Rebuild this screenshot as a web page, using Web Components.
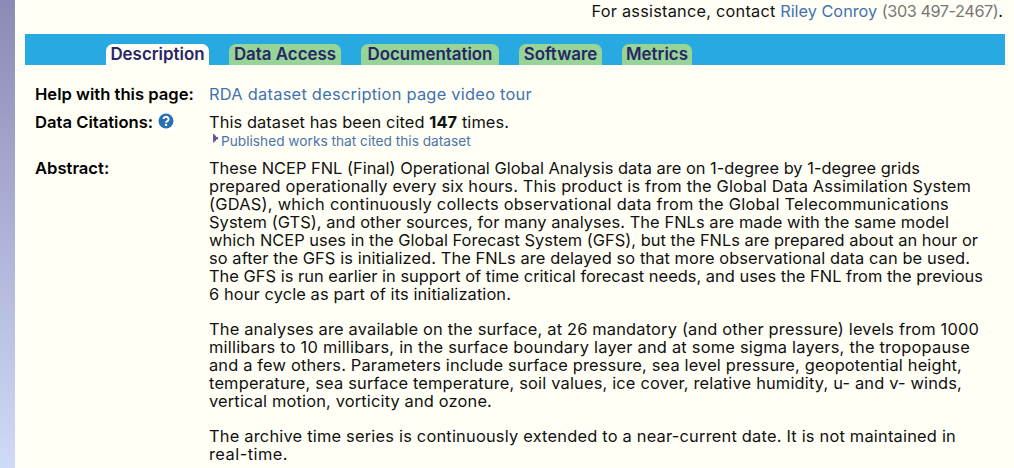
<!DOCTYPE html>
<html>
<head>
<meta charset="utf-8">
<title>Dataset description</title>
<style>
	html, body {
		margin: 0;
		height: 468px;
		overflow: hidden;
		background: #fffff6;
		font-family: Inter, "Liberation Sans", sans-serif;
	}
</style>
</head>
<body>
<rda-page>
	<rda-contact slot="contact"></rda-contact>
	<rda-tabs slot="tabs">
		<rda-tab active w="103">Description</rda-tab>
		<rda-tab w="112">Data Access</rda-tab>
		<rda-tab w="138">Documentation</rda-tab>
		<rda-tab w="83">Software</rda-tab>
		<rda-tab w="70">Metrics</rda-tab>
	</rda-tabs>
	<rda-row slot="rows" style="--row-height: 28px">
		<span slot="label">Help with this page:</span>
		<rda-line w="323" style="color:#3f72af">RDA dataset description page video tour</rda-line>
	</rda-row>
	<rda-row slot="rows" help style="--row-height: 46px">
		<span slot="label">Data Citations:</span>
		<rda-line w="300">This dataset has been cited <b>147</b> times.</rda-line>
		<rda-sublink>Published works that cited this dataset</rda-sublink>
	</rda-row>
	<rda-row slot="rows">
		<span slot="label">Abstract:</span>
		<rda-para>
			<rda-line w="711">These NCEP FNL (Final) Operational Global Analysis data are on 1-degree by 1-degree grids</rda-line>
			<rda-line w="762">prepared operationally every six hours. This product is from the Global Data Assimilation System</rda-line>
			<rda-line w="740">(GDAS), which continuously collects observational data from the Global Telecommunications</rda-line>
			<rda-line w="740">System (GTS), and other sources, for many analyses. The FNLs are made with the same model</rda-line>
			<rda-line w="769">which NCEP uses in the Global Forecast System (GFS), but the FNLs are prepared about an hour or</rda-line>
			<rda-line w="761">so after the GFS is initialized. The FNLs are delayed so that more observational data can be used.</rda-line>
			<rda-line w="774">The GFS is run earlier in support of time critical forecast needs, and uses the FNL from the previous</rda-line>
			<rda-line w="302">6 hour cycle as part of its initialization.</rda-line>
		</rda-para>
		<rda-para>
			<rda-line w="770">The analyses are available on the surface, at 26 mandatory (and other pressure) levels from 1000</rda-line>
			<rda-line w="761">millibars to 10 millibars, in the surface boundary layer and at some sigma layers, the tropopause</rda-line>
			<rda-line w="753">and a few others. Parameters include surface pressure, sea level pressure, geopotential height,</rda-line>
			<rda-line w="753">temperature, sea surface temperature, soil values, ice cover, relative humidity, u- and v- winds,</rda-line>
			<rda-line w="283">vertical motion, vorticity and ozone.</rda-line>
		</rda-para>
		<rda-para>
			<rda-line w="747">The archive time series is continuously extended to a near-current date. It is not maintained in</rda-line>
			<rda-line w="79">real-time.</rda-line>
		</rda-para>
	</rda-row>
</rda-page>

<script>
class RdaPage extends HTMLElement {
	constructor() {
		super();
		this.attachShadow({ mode: "open" }).innerHTML = `
			<style>
				:host {
					display: grid;
					grid-template-columns: 15px 1fr;
					height: 468px;
				}
				.strip {
					background: linear-gradient(#8c8ab6, #d0ddf9);
				}
				.main {
					padding: 0 9px 0 10px;
					min-width: 0;
				}
				.rows {
					padding: 20px 0 0 10px;
				}
			</style>
			<div class="strip"></div>
			<div class="main">
				<slot name="contact"></slot>
				<slot name="tabs"></slot>
				<div class="rows"><slot name="rows"></slot></div>
			</div>
		`;
	}
}

class RdaContact extends HTMLElement {
	constructor() {
		super();
		this.attachShadow({ mode: "open" }).innerHTML = `
			<style>
				:host {
					display: flex;
					justify-content: flex-end;
					height: 34px;
					padding-right: 2px;
					box-sizing: border-box;
					font-size: 16.3px;
					line-height: 22px;
					color: #111;
					white-space: pre;
				}
				em { font-style: normal; letter-spacing: .25px; }
				a { color: #3f72af; }
				span { color: #777; letter-spacing: -.45px; }
			</style>
			<div><em>For assistance, contact</em> <a>Riley Conroy</a> <span>(303 497-2467)</span>.</div>
		`;
	}
}

class RdaTabs extends HTMLElement {
	constructor() {
		super();
		this.attachShadow({ mode: "open" }).innerHTML = `
			<style>
				:host {
					display: flex;
					align-items: flex-end;
					gap: 20px;
					height: 31px;
					padding-left: 81px;
					background: #29a9e1;
				}
			</style>
			<slot></slot>
		`;
	}
}

class RdaTab extends HTMLElement {
	constructor() {
		super();
		this.attachShadow({ mode: "open" }).innerHTML = `
			<style>
				:host {
					display: block;
					height: 21px;
					border-radius: 7px 7px 0 0;
					background: #96d497;
					color: #2a2566;
					font-size: 16.9px;
					font-weight: 600;
					line-height: 21px;
					text-align: center;
					white-space: nowrap;
				}
				:host([active]) {
					background: #fffff6;
				}
			</style>
			<slot></slot>
		`;
	}

	connectedCallback() {
		this.style.width = this.getAttribute("w") + "px";
	}
}

class RdaRow extends HTMLElement {
	constructor() {
		super();
		this.attachShadow({ mode: "open" }).innerHTML = `
			<style>
				:host {
					display: grid;
					grid-template-columns: 174px 1fr;
					min-height: var(--row-height, 0);
					font-size: 16.4px;
					line-height: 18px;
					color: #111;
				}
				.label {
					font-weight: 600;
					font-size: 16.6px;
					color: #000;
					white-space: nowrap;
				}
				svg {
					vertical-align: -1px;
					margin-left: 1px;
					display: none;
				}
				:host([help]) svg {
					display: inline;
				}
			</style>
			<div class="label"><slot name="label"></slot>
				<svg width="16" height="16" viewBox="0 0 16 16">
					<circle cx="8" cy="8" r="7.5" fill="#2a6fb0"/>
					<path d="M5.4 6a2.6 2.3 0 1 1 3.9 2.1c-.9.5-1.3.8-1.3 1.6" fill="none" stroke="#fff" stroke-width="2"/>
					<rect x="6.9" y="10.8" width="2.2" height="2.2" fill="#fff"/>
				</svg>
			</div>
			<div class="body"><slot></slot></div>
		`;
	}
}

// one line of copy, tracked out to the width it has in the reference
class RdaLine extends HTMLElement {
	constructor() {
		super();
		this.attachShadow({ mode: "open" }).innerHTML = `
			<style>
				:host {
					display: block;
					white-space: nowrap;
				}
			</style>
			<slot></slot>
		`;
	}

	connectedCallback() {
		const width = Number(this.getAttribute("w"));

		this.style.width = "max-content";
		const natural = this.getBoundingClientRect().width;

		this.style.width = width + "px";
		this.style.letterSpacing = (width - natural) / this.textContent.length + "px";
	}
}

class RdaSublink extends HTMLElement {
	constructor() {
		super();
		this.attachShadow({ mode: "open" }).innerHTML = `
			<style>
				:host {
					display: block;
					padding: 2px 0 0 4px;
					font-size: 13.7px;
					line-height: 16px;
					color: #4a74ab;
				}
				svg {
					vertical-align: 2px;
					margin-right: 3px;
				}
			</style>
			<svg width="5" height="10" viewBox="0 0 5 10"><path d="M0 0h1.5v1.5h1.5v1.5h2v2.5h-2v1.5h-1.5v1.5h-1.5z" fill="#5a5a9c"/></svg><slot></slot>
		`;
	}
}

class RdaPara extends HTMLElement {
	constructor() {
		super();
		this.attachShadow({ mode: "open" }).innerHTML = `
			<style>
				:host {
					display: block;
					margin-bottom: 17px;
				}
			</style>
			<slot></slot>
		`;
	}
}

customElements.define("rda-page", RdaPage);
customElements.define("rda-contact", RdaContact);
customElements.define("rda-tabs", RdaTabs);
customElements.define("rda-tab", RdaTab);
customElements.define("rda-row", RdaRow);
customElements.define("rda-para", RdaPara);
customElements.define("rda-sublink", RdaSublink);
customElements.define("rda-line", RdaLine);
</script>
</body>
</html>
